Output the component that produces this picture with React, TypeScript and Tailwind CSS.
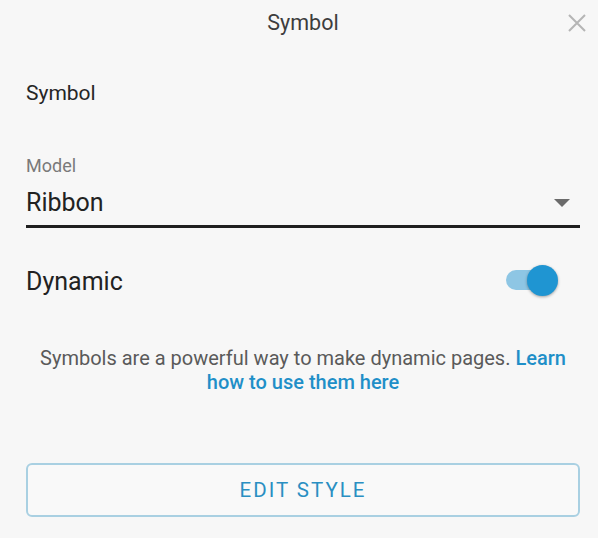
import React from "react";

export default function App() {
  return (
    <div className="w-[598px] h-[538px] bg-[#f7f7f7] overflow-hidden" style={{ fontFamily: "Roboto, 'Noto Sans', sans-serif" }}>
      <div className="relative h-[46px] flex items-center justify-center pl-[8px]">
        <span className="text-[21.5px] text-[#3d3d3d] leading-none">Symbol</span>
        <svg className="absolute right-[12px] top-[14px]" width="18" height="18" viewBox="0 0 18 18">
          <path d="M1 1 L17 17 M17 1 L1 17" stroke="#b5b5b5" strokeWidth="2" />
        </svg>
      </div>
      <div className="pl-[26px] pr-[18px] flex flex-col">
        <div className="mt-[37px] text-[21px] leading-none text-[#262626]">Symbol</div>
        <div className="mt-[53px] text-[18px] leading-none text-[#7a7a7a]">Model</div>
        <div className="mt-[15px] flex items-center justify-between border-b-[3px] border-[#1f1f1f] pb-[10px]">
          <span className="text-[25px] leading-none text-[#222]">Ribbon</span>
          <svg width="16" height="8" viewBox="0 0 16 8" className="mr-[10px]">
            <path d="M0 0 L16 0 L8 8 Z" fill="#6b6b6b" />
          </svg>
        </div>
        <div className="mt-[41px] flex items-center justify-between">
          <span className="text-[25px] leading-none text-[#222]">Dynamic</span>
          <div className="relative w-[46px] h-[20px] rounded-full bg-[#8ec6e4] mr-[28px] mb-[4px]">
            <div className="absolute right-[-6px] top-[-5px] w-[31px] h-[31px] rounded-full bg-[#1f95d2] shadow-[0_1px_3px_rgba(0,0,0,0.35)]" />
          </div>
        </div>
        <p className="mt-[52px] text-center text-[20px] leading-[24px] text-[#5a5a5a]">
          Symbols are a powerful way to make dynamic pages.{" "}
          <span className="text-[#1f8fc8] font-medium">Learn how to use them here</span>
        </p>
        <button className="mt-[69px] h-[54px] rounded-[6px] border-2 border-[#a9d0e2] bg-[#f9f9f9] text-[20.5px] tracking-[2px] text-[#2a8fc2]">
          EDIT STYLE
        </button>
      </div>
    </div>
  );
}
